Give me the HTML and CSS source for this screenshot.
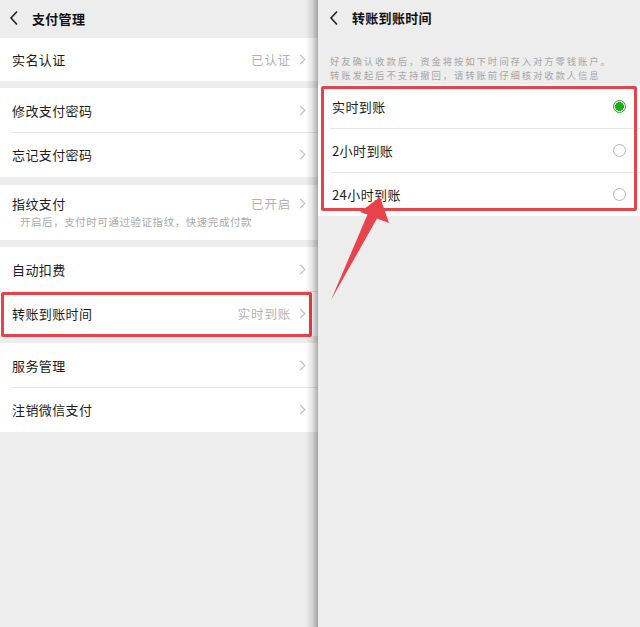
FILE: index.html
```html
<!DOCTYPE html>
<html lang="zh">
<head>
<meta charset="utf-8">
<title>支付管理</title>
<link rel="stylesheet" href="styles.css">
</head>
<body>
<div class="page">
  <section class="panel left">
    <header class="nav">
      <svg class="back" width="10" height="16" viewBox="0 0 10 16"><path d="M8 1.5 L2 8 L8 14.5" fill="none" stroke="#222" stroke-width="1.6"/></svg>
      <span class="nav-title">支付管理</span>
    </header>
    <div class="group g-first">
      <div class="row"><span class="label">实名认证</span><span class="value">已认证</span><span class="chev"></span></div>
    </div>
    <div class="group g-gap8">
      <div class="row"><span class="label">修改支付密码</span><span class="chev"></span></div>
      <div class="row divided"><span class="label">忘记支付密码</span><span class="chev"></span></div>
    </div>
    <div class="group g-gap8">
      <div class="row tall">
        <div class="row-main"><span class="label">指纹支付</span><span class="value">已开启</span><span class="chev"></span></div>
        <div class="sub">开启后，支付时可通过验证指纹，快速完成付款</div>
      </div>
    </div>
    <div class="group g-gap7">
      <div class="row"><span class="label">自动扣费</span><span class="chev"></span></div>
      <div class="row divided marked"><span class="label">转账到账时间</span><span class="value">实时到账</span><span class="chev"></span></div>
    </div>
    <div class="group g-gap7">
      <div class="row"><span class="label">服务管理</span><span class="chev"></span></div>
      <div class="row divided"><span class="label">注销微信支付</span><span class="chev"></span></div>
    </div>
  </section>
  <section class="panel right">
    <header class="nav">
      <svg class="back" width="10" height="16" viewBox="0 0 10 16"><path d="M8 1.5 L2 8 L8 14.5" fill="none" stroke="#222" stroke-width="1.6"/></svg>
      <span class="nav-title">转账到账时间</span>
    </header>
    <div class="desc">
      <span class="desc-line">好友确认收款后，资金将按如下时间存入对方零钱账户。</span>
      <span class="desc-line">转账发起后不支持撤回，请转账前仔细核对收款人信息</span>
    </div>
    <div class="options marked-box">
      <div class="opt"><span class="label">实时到账</span><span class="radio on"></span></div>
      <div class="opt divided"><span class="label">2小时到账</span><span class="radio"></span></div>
      <div class="opt divided"><span class="label">24小时到账</span><span class="radio"></span></div>
    </div>
  </section>
  <svg class="arrow" width="640" height="627" viewBox="0 0 640 627">
    <polygon points="380,197 389,223 377,218.5 331,300 367.5,214.5 360,212" fill="#e8434a"/>
  </svg>
</div>
</body>
</html>
```

FILE: styles.css
```css
* { box-sizing: border-box; }
html, body { margin: 0; padding: 0; }
body {
  width: 640px;
  height: 627px;
  overflow: hidden;
  background: #ededed;
  font-family: "Noto Sans CJK SC", "Noto Sans", sans-serif;
  color: #1c1c1c;
}
.page {
  position: relative;
  display: flex;
  width: 640px;
  height: 627px;
}
.panel {
  height: 627px;
  background: #ededed;
}
.left {
  width: 318px;
  position: relative;
}
.left::after {
  content: "";
  position: absolute;
  top: 0;
  right: 0;
  bottom: 0;
  width: 12px;
  background: linear-gradient(to right, rgba(0,0,0,0), rgba(0,0,0,0.1) 50%, rgba(0,0,0,0.32));
}
.right {
  flex: 1;
}
.nav {
  height: 38px;
  display: flex;
  align-items: center;
  padding-left: 9px;
  gap: 13px;
  padding-bottom: 2px;
}
.right .nav { padding-left: 11px; gap: 13px; height: 37px; }
.back { display: block; }
.nav-title {
  font-size: 13px;
  font-weight: 700;
  letter-spacing: 0.3px;
  color: #111;
}
.group { background: #fff; }
.g-gap8 { margin-top: 7px; }
.g-gap7 { margin-top: 7px; }
.g-first .row { height: 43px; }
.g-gap8 + .g-gap8 { margin-top: 8px; }
.row {
  height: 44px;
  display: flex;
  align-items: center;
  padding: 0 12px 0 12px;
  position: relative;
}
.row.divided { height: 45px; }
.row.divided::before,
.opt.divided::before {
  content: "";
  position: absolute;
  top: 0;
  left: 12px;
  right: 0;
  height: 1px;
  background: #e6e6e6;
}
.label {
  font-size: 13px;
  letter-spacing: 0.4px;
  flex: 1;
}
.value {
  font-size: 12.5px;
  color: #b3b3b3;
  letter-spacing: 0.8px;
  margin-right: 6px;
}
.chev {
  width: 7px;
  height: 7px;
  border-top: 1.3px solid #b8b8b8;
  border-right: 1.3px solid #b8b8b8;
  transform: rotate(45deg);
  margin-right: 2px;
}
.row.tall {
  height: 55px;
  display: block;
  padding-top: 9px;
}
.row-main {
  display: flex;
  align-items: center;
  height: 18px;
}
.sub {
  margin-top: 3px;
  padding-left: 8px;
  font-size: 10.5px;
  letter-spacing: 0.55px;
  color: #a9a9a9;
  line-height: 14px;
}
.marked::after {
  content: "";
  position: absolute;
  top: 1px;
  left: 1px;
  right: 6px;
  bottom: -1px;
  border: 3px solid #e5444b;
  border-radius: 2px;
}
.desc {
  height: 48px;
  padding: 18px 0 0 12px;
}
.desc-line {
  display: block;
  font-size: 9.4px;
  line-height: 13.5px;
  letter-spacing: 1.9px;
  color: #a6a6a6;
  white-space: nowrap;
}
.options {
  background: #fff;
  position: relative;
}
.marked-box::after {
  content: "";
  position: absolute;
  top: 1px;
  left: 3px;
  right: 3px;
  bottom: 5px;
  border: 3px solid #e5444b;
  border-radius: 2px;
}
.opt {
  height: 43px;
  display: flex;
  align-items: center;
  padding: 0 14px 0 14px;
  position: relative;
}
.opt.divided { height: 44px; }
.radio {
  width: 13px;
  height: 13px;
  border-radius: 50%;
  border: 1.2px solid #b5b5b5;
  background: #fff;
}
.radio.on {
  border: 1.2px solid #1aad19;
  background: radial-gradient(circle, #1aad19 0 4.2px, #fff 4.6px);
}
.arrow {
  position: absolute;
  top: 0;
  left: 0;
  pointer-events: none;
}
```
